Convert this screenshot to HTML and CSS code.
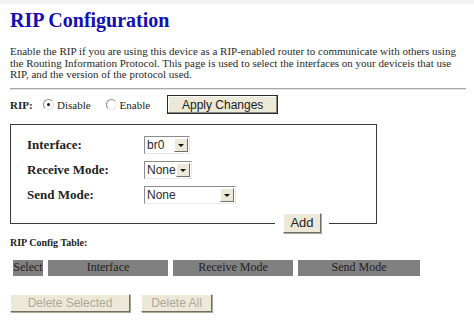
FILE: index.html
```html
<!DOCTYPE html>
<html>
<head>
<meta charset="utf-8">
<link rel="stylesheet" href="styles.css">
</head>
<body>
<div class="topband"></div>
<div class="page">
  <h1 class="title">RIP Configuration</h1>
  <p class="intro">Enable the RIP if you are using this device as a RIP-enabled router to communicate with others using the Routing Information Protocol. This page is used to select the interfaces on your deviceis that use RIP, and the version of the protocol used.</p>
  <div class="rule"></div>
  <div class="riprow">
    <span class="riplabel">RIP:</span>
    <span class="radio checked"></span><span class="radiotext">Disable</span>
    <span class="radio"></span><span class="radiotext">Enable</span>
    <span class="btn btn-apply">Apply Changes</span>
  </div>
  <div class="box">
    <div class="formrow">
      <span class="flabel">Interface:</span>
      <span class="select sel-if"><span class="val">br0</span><span class="arrow"></span></span>
    </div>
    <div class="formrow">
      <span class="flabel">Receive Mode:</span>
      <span class="select sel-rx"><span class="val">None</span><span class="arrow"></span></span>
    </div>
    <div class="formrow">
      <span class="flabel">Send Mode:</span>
      <span class="select sel-tx"><span class="val">None</span><span class="arrow"></span></span>
    </div>
    <div class="addwrap"><span class="btn btn-add">Add</span></div>
  </div>
  <div class="tabletitle">RIP Config Table:</div>
  <table class="cfgtable">
    <tr>
      <th class="c-sel">Select</th>
      <th class="c-if">Interface</th>
      <th class="c-rx">Receive Mode</th>
      <th class="c-tx">Send Mode</th>
    </tr>
  </table>
  <div class="actions">
    <span class="btn disabled btn-delsel">Delete Selected</span>
    <span class="btn disabled btn-delall">Delete All</span>
  </div>
</div>
</body>
</html>
```

FILE: styles.css
```css
html, body {
  margin: 0;
  padding: 0;
  background: #ffffff;
}
body {
  width: 474px;
  height: 327px;
  overflow: hidden;
  font-family: "Liberation Serif", "Times New Roman", serif;
  color: #222222;
}
.topband {
  height: 4px;
  background: #f2f3f3;
}
.page {
  padding-left: 10px;
}
.title {
  margin: 0;
  padding-top: 4px;
  font-size: 20px;
  line-height: 24px;
  font-weight: bold;
  color: #1010b4;
}
.intro {
  margin: 14px 0 0 0;
  width: 462px;
  font-size: 11px;
  line-height: 11.5px;
  color: #2a2a2a;
}
.rule {
  margin-top: 7px;
  width: 456px;
  height: 0;
  border-top: 1px solid #a8a8a8;
  border-bottom: 1px solid #e4e4e4;
}
.riprow {
  display: flex;
  align-items: center;
  height: 20px;
  margin-top: 5px;
  font-size: 11px;
}
.riplabel {
  font-weight: bold;
  width: 33px;
}
.radio {
  width: 9px;
  height: 9px;
  border-radius: 50%;
  border: 1px solid;
  border-color: #8a8a8a #e6e6e6 #e6e6e6 #8a8a8a;
  background: #ffffff;
  position: relative;
  margin-right: 3px;
}
.radio.checked::after {
  content: "";
  position: absolute;
  left: 3px;
  top: 3px;
  width: 3px;
  height: 3px;
  border-radius: 50%;
  background: #111111;
}
.radiotext {
  margin-right: 15px;
}
.btn {
  display: inline-flex;
  align-items: center;
  justify-content: center;
  box-sizing: border-box;
  font-family: "Liberation Sans", Arial, sans-serif;
  font-size: 12px;
  color: #222222;
  background: #ece9d8;
  border: 1px solid;
  border-color: #ffffff #716f64 #716f64 #ffffff;
  box-shadow: 1px 1px 0 #aca899;
}
.btn-apply {
  width: 111px;
  height: 19px;
  margin-left: 2px;
  border: 1px solid #2b2b2b;
  box-shadow: inset -1px -1px 0 #8a877a, inset 1px 1px 0 #ffffff;
}
.box {
  position: relative;
  box-sizing: border-box;
  width: 367px;
  height: 100px;
  margin-top: 9px;
  border: 1px solid #3a3a3a;
  padding-top: 11px;
  padding-left: 16px;
}
.formrow {
  display: flex;
  align-items: center;
  height: 18px;
  margin-bottom: 7px;
}
.flabel {
  width: 117px;
  font-size: 13px;
  font-weight: bold;
  color: #222222;
}
.select {
  display: inline-flex;
  align-items: center;
  box-sizing: border-box;
  height: 18px;
  border: 1px solid;
  border-color: #8d8d8d #e8e8e8 #e8e8e8 #8d8d8d;
  background: #ffffff;
  font-family: "Liberation Sans", Arial, sans-serif;
  font-size: 12px;
  color: #2a2a2a;
  padding: 0 1px 0 2px;
}
.select .val {
  flex: 1;
}
.select .arrow {
  position: relative;
  width: 14px;
  height: 14px;
  box-sizing: border-box;
  background: #ece9d8;
  border: 1px solid;
  border-color: #ffffff #716f64 #716f64 #ffffff;
}
.select .arrow::after {
  content: "";
  position: absolute;
  left: 3px;
  top: 5px;
  border-left: 3px solid transparent;
  border-right: 3px solid transparent;
  border-top: 3px solid #111111;
}
.sel-if { width: 46px; }
.sel-rx { width: 48px; }
.sel-tx { width: 92px; }
.addwrap {
  position: absolute;
  left: 264px;
  bottom: -10px;
  padding: 0 8px;
  background: #ffffff;
}
.btn-add {
  width: 38px;
  height: 20px;
  font-size: 13px;
}
.tabletitle {
  margin-top: 13px;
  font-size: 10px;
  font-weight: bold;
  color: #222222;
}
.cfgtable {
  margin-left: -2px;
  margin-top: 7px;
  border-spacing: 5px;
}
.cfgtable th {
  background: #808080;
  font-weight: normal;
  font-size: 12px;
  height: 16px;
  padding: 0;
  color: #222222;
}
.c-sel { width: 30px; }
.c-if { width: 120px; }
.c-rx { width: 120px; }
.c-tx { width: 122px; }
.actions {
  display: flex;
  gap: 11px;
  margin-top: 13px;
}
.btn.disabled {
  color: #aca899;
}
.btn-delsel { width: 120px; height: 18px; }
.btn-delall { width: 71px; height: 18px; }
```
